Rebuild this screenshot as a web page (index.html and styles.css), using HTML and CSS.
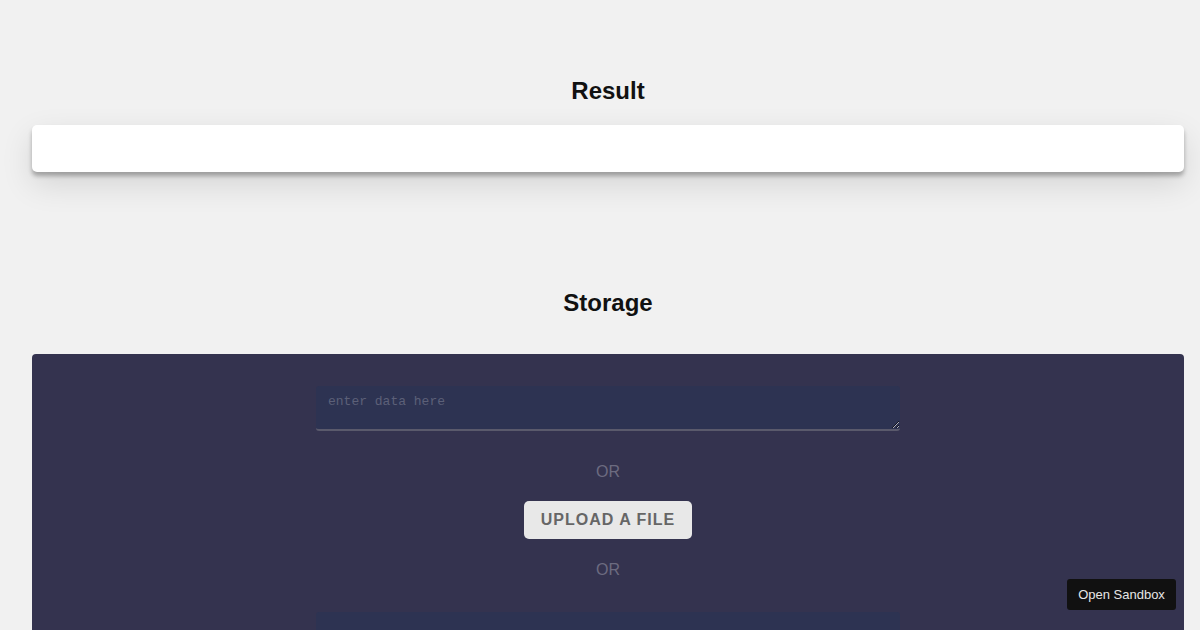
FILE: index.html
```html
<!DOCTYPE html>
<html>
<head>
<meta charset="utf-8">
<link rel="stylesheet" href="styles.css">
</head>
<body>
<main class="page">
  <section class="section result-section">
    <h2 class="heading">Result</h2>
    <div class="result-card"></div>
  </section>
  <section class="section storage-section">
    <h2 class="heading">Storage</h2>
    <div class="storage-panel">
      <textarea class="data-input" placeholder="enter data here"></textarea>
      <div class="or">OR</div>
      <button class="upload-btn">UPLOAD A FILE</button>
      <div class="or or-second">OR</div>
      <div class="url-box"></div>
    </div>
  </section>
</main>
<button class="sandbox-btn">Open Sandbox</button>
</body>
</html>
```

FILE: styles.css
```css
html, body {
  margin: 0;
  padding: 0;
  background: #f1f1f1;
  font-family: "Liberation Sans", Arial, sans-serif;
  overflow: hidden;
}

.page {
  padding: 77px 16px 0 32px;
}

.heading {
  margin: 0;
  font-size: 24px;
  line-height: 28px;
  font-weight: 700;
  color: #111;
  text-align: center;
}

.result-card {
  margin-top: 20px;
  height: 47px;
  background: #fff;
  border-radius: 5px;
  box-shadow: 0 4px 4px rgba(0, 0, 0, 0.28), 0 12px 32px rgba(0, 0, 0, 0.12);
}

.storage-section {
  margin-top: 117px;
}

.storage-panel {
  margin-top: 37px;
  background: #34334f;
  border-radius: 4px 4px 0 0;
  padding-top: 32px;
  height: 400px;
  display: flex;
  flex-direction: column;
  align-items: center;
}

.data-input {
  box-sizing: border-box;
  width: 584px;
  height: 45px;
  background: #2d3352;
  border: none;
  border-bottom: 2px solid #5a5a6c;
  border-radius: 3px;
  padding: 8px 12px;
  font-family: "Liberation Mono", "Courier New", monospace;
  font-size: 13px;
  color: #ccc;
  margin: 0;
  outline: none;
}

.data-input::placeholder {
  color: #5c6078;
}

.or {
  margin-top: 32px;
  font-size: 16px;
  line-height: 18px;
  color: #6c6b80;
}

.upload-btn {
  margin-top: 20px;
  height: 38px;
  padding: 0 17px;
  background: #e8e8e8;
  border: none;
  border-radius: 5px;
  font-family: "Liberation Sans", Arial, sans-serif;
  font-weight: 700;
  font-size: 16px;
  letter-spacing: 1px;
  color: #666;
}

.or-second {
  margin-top: 22px;
}

.url-box {
  margin-top: 33px;
  width: 584px;
  height: 45px;
  background: #2d3352;
  border-radius: 3px;
}

.sandbox-btn {
  position: fixed;
  right: 24px;
  bottom: 20px;
  width: 109px;
  height: 31px;
  background: #111;
  color: #e6e6e6;
  border: none;
  border-radius: 3px;
  font-family: "Liberation Sans", Arial, sans-serif;
  font-size: 13px;
  padding: 0;
}
```
